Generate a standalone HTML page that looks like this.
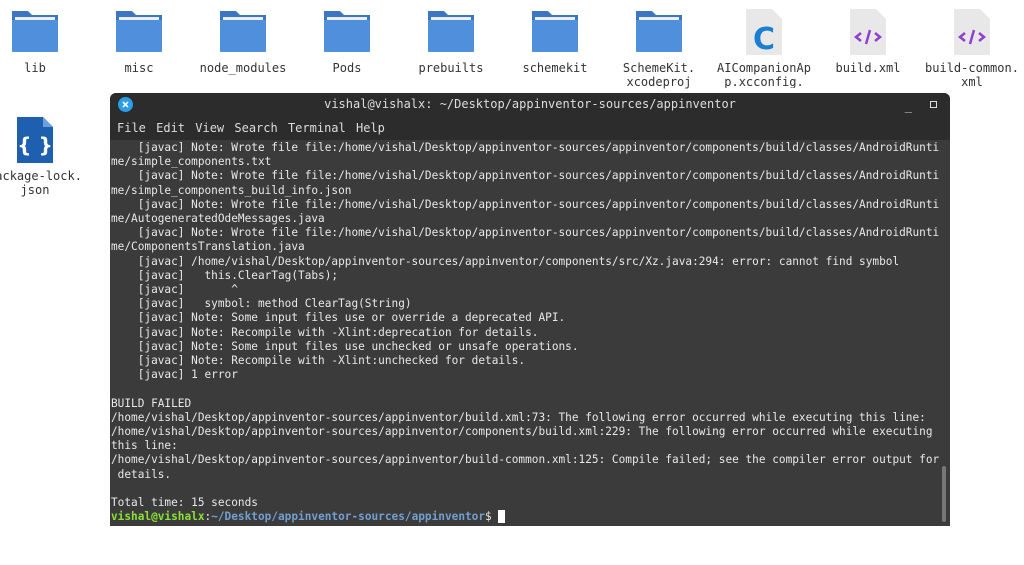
<!DOCTYPE html><html><head><style>
body{margin:0;width:1024px;height:565px;background:#fff;position:relative;overflow:hidden;font-family:"DejaVu Sans Mono","Liberation Mono",monospace;}
.ic{position:absolute;width:104px;text-align:center;font-size:12px;color:#333;line-height:14px}
.ic svg{display:block;margin:0 auto 7px}
.term{position:absolute;left:110px;top:93px;width:840px;height:433px;background:#3b3b3b;border-radius:6px 6px 0 0;overflow:hidden}
.tb{height:23px;background:#2c2c2c;color:#ddd;font-size:12px;text-align:center;line-height:23px}
.mb{height:24px;background:#2c2c2c;color:#ddd;font-size:12px;line-height:24px;padding-left:7px;word-spacing:3px}
pre{margin:0;padding:1px 0 0 1px;font-family:"DejaVu Sans Mono","Liberation Mono",monospace;font-size:11.1px;line-height:14.2px;color:#e8e8e8}
.g{color:#8ae234;font-weight:bold}.b{color:#729fcf;font-weight:bold}
</style></head><body>
<div class="ic" style="left:-17px;top:10px"><svg width="48" height="44"><path d="M1 1h16l4 4h26v34H1z" fill="#3d76c0"/><rect x="4" y="7" width="40" height="4" fill="#eee"/><rect x="1" y="10" width="46" height="32" fill="#4f8fdc" rx="1"/></svg>lib</div>
<div class="ic" style="left:87px;top:10px"><svg width="48" height="44"><path d="M1 1h16l4 4h26v34H1z" fill="#3d76c0"/><rect x="4" y="7" width="40" height="4" fill="#eee"/><rect x="1" y="10" width="46" height="32" fill="#4f8fdc" rx="1"/></svg>misc</div>
<div class="ic" style="left:191px;top:10px"><svg width="48" height="44"><path d="M1 1h16l4 4h26v34H1z" fill="#3d76c0"/><rect x="4" y="7" width="40" height="4" fill="#eee"/><rect x="1" y="10" width="46" height="32" fill="#4f8fdc" rx="1"/></svg>node_modules</div>
<div class="ic" style="left:295px;top:10px"><svg width="48" height="44"><path d="M1 1h16l4 4h26v34H1z" fill="#3d76c0"/><rect x="4" y="7" width="40" height="4" fill="#eee"/><rect x="1" y="10" width="46" height="32" fill="#4f8fdc" rx="1"/></svg>Pods</div>
<div class="ic" style="left:399px;top:10px"><svg width="48" height="44"><path d="M1 1h16l4 4h26v34H1z" fill="#3d76c0"/><rect x="4" y="7" width="40" height="4" fill="#eee"/><rect x="1" y="10" width="46" height="32" fill="#4f8fdc" rx="1"/></svg>prebuilts</div>
<div class="ic" style="left:503px;top:10px"><svg width="48" height="44"><path d="M1 1h16l4 4h26v34H1z" fill="#3d76c0"/><rect x="4" y="7" width="40" height="4" fill="#eee"/><rect x="1" y="10" width="46" height="32" fill="#4f8fdc" rx="1"/></svg>schemekit</div>
<div class="ic" style="left:607px;top:10px"><svg width="48" height="44"><path d="M1 1h16l4 4h26v34H1z" fill="#3d76c0"/><rect x="4" y="7" width="40" height="4" fill="#eee"/><rect x="1" y="10" width="46" height="32" fill="#4f8fdc" rx="1"/></svg>SchemeKit.<br>xcodeproj</div>
<div class="ic" style="left:712px;top:8px;height:80px;overflow:hidden"><svg width="38" height="48" style="margin-bottom:5px"><path d="M1 1h26l10 10v36H1z" fill="#e8e8e8"/><text x="19" y="41" font-size="30" font-weight="bold" fill="#1a7fd0" text-anchor="middle" font-family="DejaVu Sans">C</text></svg>AICompanionAp<br>p.xcconfig.<br>xml</div>
<div class="ic" style="left:816px;top:8px"><svg width="38" height="48" style="margin-bottom:5px"><path d="M1 1h26l10 10v36H1z" fill="#e8e8e8"/><path d="M12 25l-5 4 5 4M26 25l5 4-5 4M21 22l-4 14" stroke="#9040d0" stroke-width="2.5" fill="none"/></svg>build.xml</div>
<div class="ic" style="left:920px;top:8px"><svg width="38" height="48" style="margin-bottom:5px"><path d="M1 1h26l10 10v36H1z" fill="#e8e8e8"/><path d="M12 25l-5 4 5 4M26 25l5 4-5 4M21 22l-4 14" stroke="#9040d0" stroke-width="2.5" fill="none"/></svg>build-common.<br>xml</div>
<div class="ic" style="left:-17px;top:116px"><svg width="38" height="48" style="margin-bottom:5px"><path d="M1 1h26l10 10v36H1z" fill="#1f5fb0"/><path d="M27 1v10h10z" fill="#6a9fe0"/><text x="19" y="36" font-size="20" font-weight="bold" fill="#fff" text-anchor="middle" font-family="DejaVu Sans">{ }</text></svg>package-lock.<br>json</div>
<div class="term">
<div class="tb"><svg style="position:absolute;left:8px;top:4px" width="15" height="15"><circle cx="7.5" cy="7.5" r="7.5" fill="#2a9ee8"/><path d="M5 5l5 5M10 5l-5 5" stroke="#fff" stroke-width="1.6"/></svg>vishal@vishalx: ~/Desktop/appinventor-sources/appinventor<span style="position:absolute;right:38px;top:2px">_</span><span style="position:absolute;right:13px;top:8px;width:5px;height:5px;border:1.5px solid #ddd"></span></div>
<div class="mb">File Edit View Search Terminal Help</div>
<pre>    [javac] Note: Wrote file file:/home/vishal/Desktop/appinventor-sources/appinventor/components/build/classes/AndroidRunti
me/simple_components.txt
    [javac] Note: Wrote file file:/home/vishal/Desktop/appinventor-sources/appinventor/components/build/classes/AndroidRunti
me/simple_components_build_info.json
    [javac] Note: Wrote file file:/home/vishal/Desktop/appinventor-sources/appinventor/components/build/classes/AndroidRunti
me/AutogeneratedOdeMessages.java
    [javac] Note: Wrote file file:/home/vishal/Desktop/appinventor-sources/appinventor/components/build/classes/AndroidRunti
me/ComponentsTranslation.java
    [javac] /home/vishal/Desktop/appinventor-sources/appinventor/components/src/Xz.java:294: error: cannot find symbol
    [javac]   this.ClearTag(Tabs);
    [javac]       ^
    [javac]   symbol: method ClearTag(String)
    [javac] Note: Some input files use or override a deprecated API.
    [javac] Note: Recompile with -Xlint:deprecation for details.
    [javac] Note: Some input files use unchecked or unsafe operations.
    [javac] Note: Recompile with -Xlint:unchecked for details.
    [javac] 1 error

BUILD FAILED
/home/vishal/Desktop/appinventor-sources/appinventor/build.xml:73: The following error occurred while executing this line:
/home/vishal/Desktop/appinventor-sources/appinventor/components/build.xml:229: The following error occurred while executing
this line:
/home/vishal/Desktop/appinventor-sources/appinventor/build-common.xml:125: Compile failed; see the compiler error output for
 details.

Total time: 15 seconds
<span class="g">vishal@vishalx</span>:<span class="b">~/Desktop/appinventor-sources/appinventor</span>$ <span style="background:#fff">&nbsp;</span></pre>
<div style="position:absolute;left:832px;top:373px;width:4px;height:56px;background:#777;border-radius:2px"></div>
</div>
</body></html>
